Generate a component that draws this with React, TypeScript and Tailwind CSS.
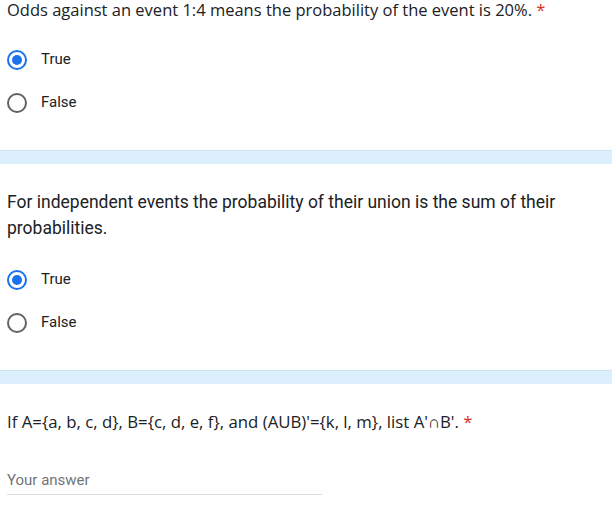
import React from "react";

type Option = { label: string; checked?: boolean };

function Radio({ label, checked }: Option) {
  return (
    <div className="flex h-[43px] items-center">
      <div className="ml-[7px] flex size-5 items-center justify-center rounded-full border-2 border-solid"
        style={{ borderColor: checked ? "#1a73e8" : "#5f6368" }}>
        {checked && <div className="size-[10px] rounded-full bg-[#1a73e8]" />}
      </div>
      <span className="ml-[14px] font-['Roboto',sans-serif] text-[15px] text-[#202124]">{label}</span>
    </div>
  );
}

function Band() {
  return <div className="h-[14px] border-t border-[#c9e3f5] bg-[#dbeffc]" />;
}

const titleFont = "font-['Open_Sans','Noto_Sans',sans-serif]";

export default function App() {
  return (
    <div className="w-[612px] bg-white">
      <section className="pb-[26px]">
        <p className={`px-[7px] text-[16.5px] leading-[20px] text-[#202124] ${titleFont}`}>
          Odds against an event 1:4 means the probability of the event is 20%.{" "}
          <span className="text-[#d93025]">*</span>
        </p>
        <div className="mt-[18px]">
          <Radio label="True" checked />
          <Radio label="False" />
        </div>
      </section>
      <Band />
      <section className="pt-[25px] pb-[26px]">
        <p className="px-[7px] font-['Roboto',sans-serif] text-[17.5px] leading-[26px] text-[#202124]">
          For independent events the probability of their union is the sum of their probabilities.
        </p>
        <div className="mt-[17px]">
          <Radio label="True" checked />
          <Radio label="False" />
        </div>
      </section>
      <Band />
      <section className="pt-[26px] pb-[15px]">
        <p className={`px-[7px] text-[16.8px] leading-[24px] text-[#202124] ${titleFont}`}>
          If A={"{"}a, b, c, d{"}"}, B={"{"}c, d, e, f{"}"}, and (AUB)'={"{"}k, l, m{"}"}, list A'∩B'.{" "}
          <span className="text-[#d93025]">*</span>
        </p>
        <div className="ml-[7px] mt-[32px] flex h-[29px] w-[315px] items-center border-b border-[#dadce0]">
          <span className="font-['Roboto',sans-serif] text-[15px] text-[#70757a]">Your answer</span>
        </div>
      </section>
    </div>
  );
}
